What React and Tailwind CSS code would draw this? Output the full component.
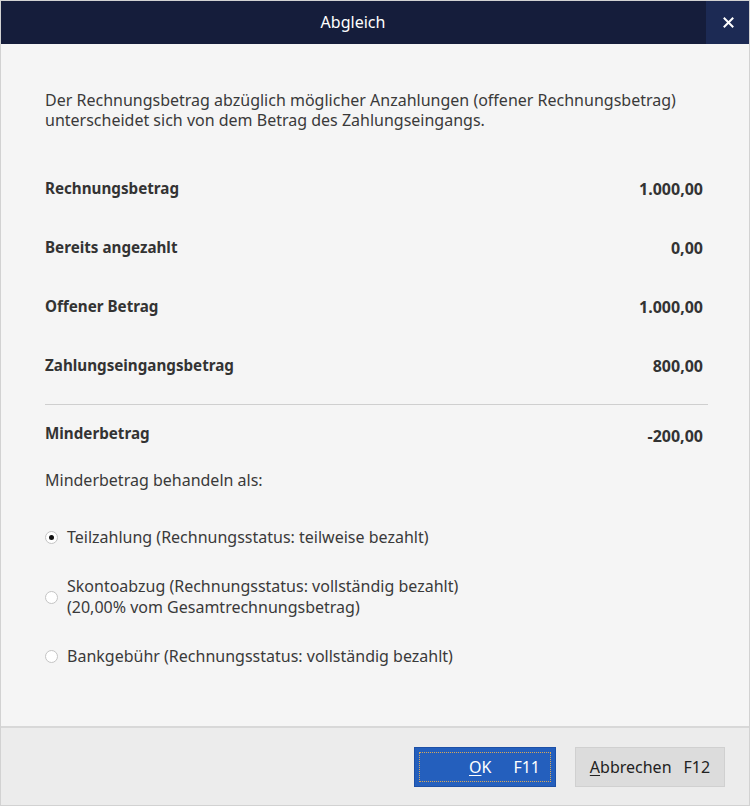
// Abgleich-Dialog: Minderbetrag beim Zahlungseingang behandeln
import { useState } from 'react'

const betraege = [
  { label: 'Rechnungsbetrag', wert: '1.000,00' },
  { label: 'Bereits angezahlt', wert: '0,00' },
  { label: 'Offener Betrag', wert: '1.000,00' },
  { label: 'Zahlungseingangsbetrag', wert: '800,00' },
]

const optionen = [
  { id: 'teil', zeilen: ['Teilzahlung (Rechnungsstatus: teilweise bezahlt)'] },
  { id: 'skonto', zeilen: ['Skontoabzug (Rechnungsstatus: vollständig bezahlt)', '(20,00% vom Gesamtrechnungsbetrag)'] },
  { id: 'bank', zeilen: ['Bankgebühr (Rechnungsstatus: vollständig bezahlt)'] },
]

function Radio({ checked }) {
  return (
    <span className="w-[13px] h-[13px] rounded-full border border-[#c4c4c4] bg-white flex items-center justify-center shrink-0">
      {checked && <span className="w-[5px] h-[5px] rounded-full bg-[#111]" />}
    </span>
  )
}

export default function App() {
  const [wahl, setWahl] = useState('teil')

  return (
    <div className="w-[750px] h-[806px] flex flex-col border border-[#d2d2d2] bg-[#f5f5f5] text-[#333] font-['Noto_Sans',sans-serif] text-[16px] overflow-hidden">

      {/* Titelleiste */}
      <div className="h-[44px] bg-[#151d3b] flex items-stretch shrink-0 -mx-px -mt-px">
        <div className="flex-1 flex items-center justify-center text-white text-[16px]">Abgleich</div>
        <button className="w-[44px] bg-[#1c2a54] text-white flex items-center justify-center">
          <svg width="11" height="11" viewBox="0 0 11 11">
            <path d="M1.5 1.5 L9.5 9.5 M9.5 1.5 L1.5 9.5" stroke="white" strokeWidth="2" strokeLinecap="square" />
          </svg>
        </button>
      </div>

      {/* Inhalt */}
      <div className="flex-1 pl-[44px] pr-[41px] pt-[46px]">
        <p className="leading-[20px] text-[#3a3a3a]">
          Der Rechnungsbetrag abzüglich möglicher Anzahlungen (offener Rechnungsbetrag)<br />
          unterscheidet sich von dem Betrag des Zahlungseingangs.
        </p>

        <div className="mt-[29px]">
          {betraege.map((b) => (
            <div key={b.label} className="h-[59px] flex items-center justify-between font-bold pr-[5px]">
              <span className="text-[15.2px]">{b.label}</span>
              <span>{b.wert}</span>
            </div>
          ))}
        </div>

        <div className="mt-[9px] border-t border-[#cfcfcf]" />

        <div className="mt-[18px] flex justify-between font-bold pr-[5px]">
          <span className="leading-[20px] text-[15.2px]">Minderbetrag</span>
          <span className="leading-[20px] mt-[3px]">-200,00</span>
        </div>

        <div className="mt-[24px] leading-[20px] text-[#3a3a3a]">Minderbetrag behandeln als:</div>

        <div className="mt-[37px] flex flex-col gap-[28px]">
          {optionen.map((o) => (
            <label key={o.id} className="flex items-center gap-[9px] cursor-pointer" onClick={() => setWahl(o.id)}>
              <Radio checked={wahl === o.id} />
              <span className="leading-[21px] text-[#3a3a3a]">
                {o.zeilen.map((z) => (
                  <span key={z} className="block">{z}</span>
                ))}
              </span>
            </label>
          ))}
        </div>
      </div>

      {/* Fußleiste */}
      <div className="h-[79px] shrink-0 border-t-2 border-[#d8d8d8] bg-[#ececec] flex items-center justify-end gap-[19px] pr-[24px]">
        <button className="w-[142px] h-[40px] bg-[#245fbd] border border-[#1d50a6] p-[4px]">
          <span className="w-full h-full border border-dotted border-[#d6a85a] flex items-center justify-end gap-[22px] pr-[10px] text-white text-[16px]">
            <span><span className="underline underline-offset-2">O</span>K</span>
            <span>F11</span>
          </span>
        </button>
        <button className="w-[150px] h-[40px] bg-[#dcdcdc] border border-[#d0d0d0] flex items-center justify-center gap-[12px] text-[#222] text-[16px]">
          <span><span className="underline underline-offset-2">A</span>bbrechen</span>
          <span>F12</span>
        </button>
      </div>
    </div>
  )
}
